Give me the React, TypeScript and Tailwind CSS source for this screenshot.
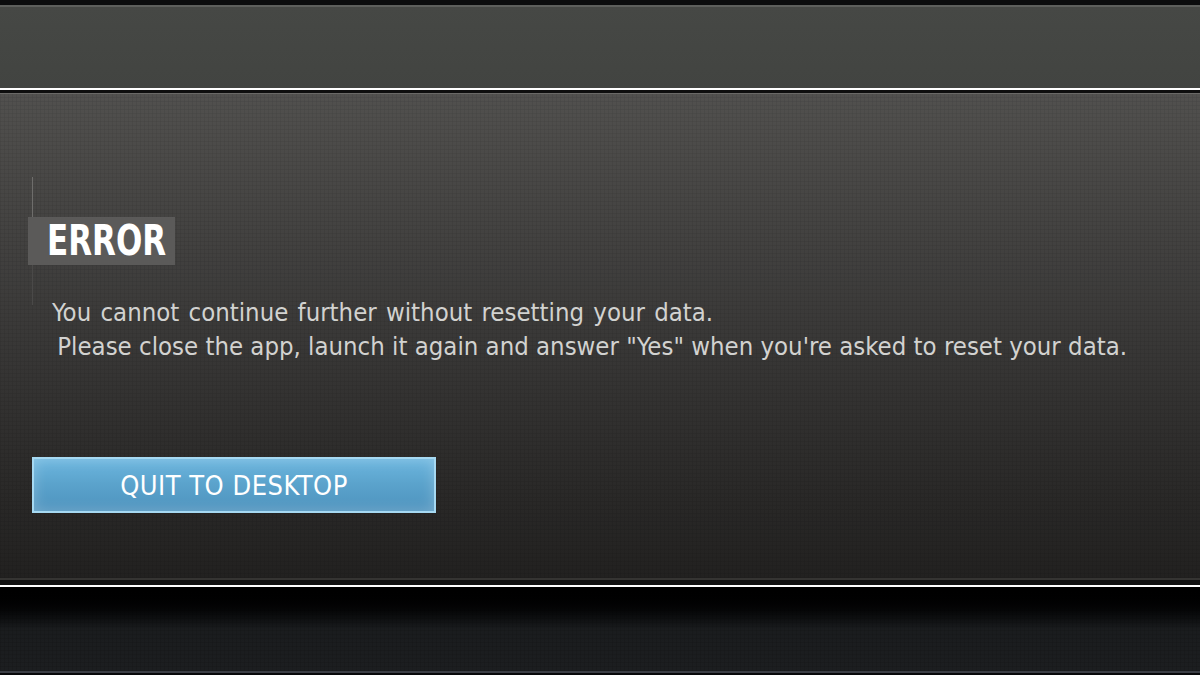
import { FC } from "react";

const grid =
  "bg-[repeating-linear-gradient(90deg,rgba(0,0,0,0.12)_0px,rgba(0,0,0,0.12)_1px,transparent_1px,transparent_4px),repeating-linear-gradient(0deg,rgba(0,0,0,0.12)_0px,rgba(0,0,0,0.12)_1px,transparent_1px,transparent_4px)]";

const App: FC = () => {
  return (
    <div className="w-[1200px] h-[675px] flex flex-col overflow-hidden bg-black font-['DejaVu_Sans_Condensed',sans-serif]">
      {/* top bar */}
      <div className="h-[5px] bg-[#0b0c0d]" />
      <div className="h-[2px] bg-[#5d5f5c]" />
      <div className="h-[81px] bg-gradient-to-b from-[#464845] to-[#424441]" />
      <div className="h-[2px] bg-white" />
      <div className="h-[3px] bg-[#0e0e0e]" />
      <div className="h-[1px] bg-[#6a6967]" />

      {/* main panel */}
      <div className="relative h-[484px] bg-gradient-to-b from-[#51504e] via-[#393837] to-[#222120]">
        <div className={`absolute inset-0 ${grid} opacity-40`} />
        <div className="relative pt-[83px] pl-[28px]">
          <div className="ml-[4px] w-[1px] h-[40px] bg-[#6e6d6b]" />
          <div className="flex">
            <div className="flex items-center w-[147px] h-[48px] bg-[#5b5a59]">
              <div className="w-[4px] h-full bg-[#a3a2a0]" />
              <span className="ml-[15px] text-[42px] font-bold text-white leading-none whitespace-nowrap origin-left scale-x-[0.82] translate-x-[4px]">
                ERROR
              </span>
            </div>
          </div>
          <div className="flex">
            <div className="ml-[4px] w-[1px] h-[40px] bg-[#4a4948]" />
            <div className="pl-[19px] pt-[30px] text-[25.5px] leading-[34px] text-[#d2d2d0] whitespace-pre">
              <div className="[word-spacing:2px]">You cannot continue further without resetting your data.</div>
              <div className="-ml-[2px]">{' Please close the app, launch it again and answer "Yes" when you\'re asked to reset your data.'}</div>
            </div>
          </div>
          <button className="mt-[94px] ml-[4px] w-[404px] h-[56px] flex items-center justify-center border-2 border-[#a6d9f2] bg-gradient-to-b from-[#6cb6df] via-[#5aa2cb] to-[#4e93be] shadow-[inset_0_0_14px_rgba(255,255,255,0.25)]">
            <span className="text-[27px] tracking-[0.5px] text-white leading-none">QUIT TO DESKTOP</span>
          </button>
        </div>
      </div>

      {/* bottom bar */}
      <div className="h-[2px] bg-[#353432]" />
      <div className="h-[5px] bg-[#111111]" />
      <div className="h-[2px] bg-white" />
      <div className="relative h-[84px] bg-gradient-to-b from-[#000000] via-[#1a1c1e] to-[#1c1e20]">
        <div className={`absolute inset-0 ${grid} opacity-60`} />
      </div>
      <div className="h-[2px] bg-[#3b3e45]" />
      <div className="flex-1 bg-[#08090a]" />
    </div>
  );
};

export default App;
